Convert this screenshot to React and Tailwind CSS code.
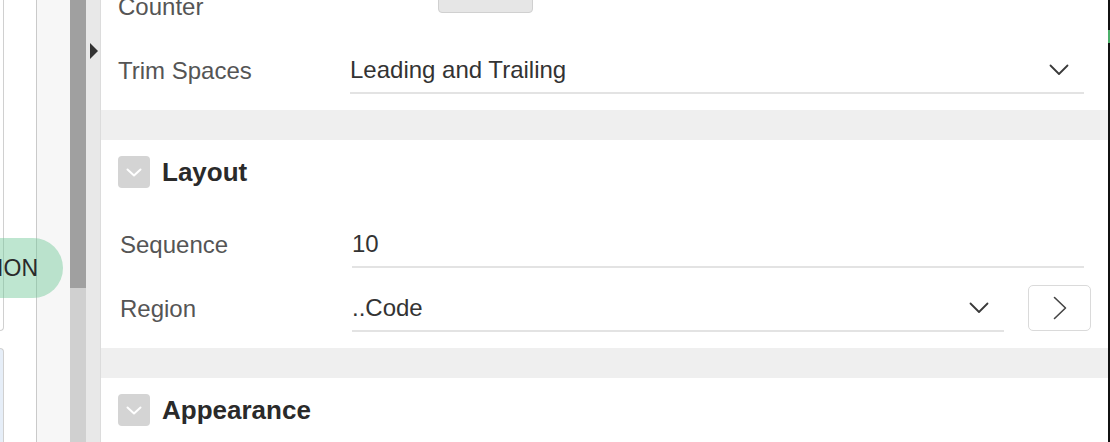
import React from 'react';

const font = { fontFamily: '"Liberation Sans", Arial, sans-serif' };

const ChevronDown = ({ className = '' }) => (
  <svg className={className} width="20" height="12" viewBox="0 0 20 12" fill="none">
    <path d="M1.5 1.5 L10 10 L18.5 1.5" stroke="#3a3a3a" strokeWidth="1.8" strokeLinecap="round" strokeLinejoin="round" />
  </svg>
);

const ChevronRight = () => (
  <svg width="14" height="24" viewBox="0 0 14 24" fill="none">
    <path d="M1.5 1.5 L12.5 12 L1.5 22.5" stroke="#444" strokeWidth="1.6" strokeLinecap="round" strokeLinejoin="round" />
  </svg>
);

const SectionHeader = ({ title }) => (
  <div className="flex items-center pl-[17px] pt-[16px] pb-[16px]">
    <div className="w-[32px] h-[32px] rounded-[4px] bg-[#d4d4d4] flex items-center justify-center">
      <svg width="16" height="9" viewBox="0 0 16 9" fill="none">
        <path d="M1.5 1.5 L8 7.5 L14.5 1.5" stroke="#ffffff" strokeWidth="2" strokeLinecap="round" strokeLinejoin="round" />
      </svg>
    </div>
    <span className="ml-[12px] text-[26px] font-bold text-[#2a2a2a] leading-[32px]">{title}</span>
  </div>
);

const Label = ({ children }) => (
  <div className="w-[232px] shrink-0 flex items-center pt-[2px] text-[24px] text-[#555]">{children}</div>
);

export default function App() {
  return (
    <div className="relative flex h-[442px] w-[1110px] overflow-hidden bg-white" style={font}>
      {/* canvas edge */}
      <div className="w-[36px] shrink-0 flex flex-col">
        <div className="h-[331px] w-[4px] border-r border-b border-[#d0d0d0] rounded-br-[6px]" />
        <div className="mt-[17px] flex-1 w-[4px] bg-[#e6eef8] border-r border-t border-[#d0d0d0] rounded-tr-[6px]" />
      </div>
      <div className="w-[34px] shrink-0 border-l border-[#cacaca] bg-[#f7f7f7]" />

      {/* scrollbar */}
      <div className="w-[16px] shrink-0 flex flex-col">
        <div className="h-[288px] bg-[#a0a0a0]" />
        <div className="flex-1 bg-[#d0d0d0]" />
      </div>

      {/* collapse strip */}
      <div className="w-[15px] shrink-0 bg-[#e8e8e8] border-r border-[#dcdcdc] pt-[43px] pl-[4px]">
        <svg width="8" height="16" viewBox="0 0 8 16">
          <path d="M0 0 L8 8 L0 16 Z" fill="#333" />
        </svg>
      </div>

      {/* property panel */}
      <div className="flex-1 flex flex-col overflow-hidden">
        <div className="pl-[17px] pr-[24px] pb-[16px]">
          <div className="-mt-[18px] flex h-[48px]">
            <Label>Counter</Label>
            <div className="ml-[88px] h-[31px] w-[95px] bg-[#e6e6e6] border border-[#d0d0d0] rounded-b-[4px]" />
          </div>
          <div className="mt-[16px] flex h-[48px]">
            <Label>Trim Spaces</Label>
            <div className="flex-1 flex items-center justify-between border-b-2 border-[#e3e3e3] pt-[2px] pr-[15px] text-[24px] text-[#333]">
              <span>Leading and Trailing</span>
              <ChevronDown />
            </div>
          </div>
        </div>

        <div className="h-[30px] shrink-0 bg-[#efefef]" />

        <SectionHeader title="Layout" />
        <div className="mt-[16px] pl-[19px] pr-[24px] flex h-[48px]">
          <Label>Sequence</Label>
          <div className="flex-1 flex items-center border-b-2 border-[#e3e3e3] pt-[2px] text-[24px] text-[#333]">
            <span>10</span>
          </div>
        </div>
        <div className="mt-[16px] pl-[19px] pr-[17px] flex h-[48px] items-stretch">
          <Label>Region</Label>
          <div className="flex-1 flex items-center justify-between border-b-2 border-[#e3e3e3] pt-[2px] pr-[15px] text-[24px] text-[#333]">
            <span>..Code</span>
            <ChevronDown />
          </div>
          <button className="ml-[24px] my-[1px] w-[63px] rounded-[5px] border border-[#dadada] bg-white flex items-center justify-center">
            <ChevronRight />
          </button>
        </div>
        <div className="h-[16px] shrink-0" />

        <div className="h-[30px] shrink-0 bg-[#efefef]" />

        <SectionHeader title="Appearance" />
      </div>

      {/* window edge */}
      <div className="w-[2px] shrink-0 bg-[#111] pt-[30px]">
        <div className="h-[13px] w-[2px] bg-[#4caf6a]" />
      </div>

      {/* pill overlapping canvas */}
      <div className="absolute left-[-40px] top-[238px] h-[60px] w-[103px] rounded-full bg-[rgba(110,200,150,0.45)] flex items-center justify-end pr-[25px] text-[23px] text-[#2a2a2a]">
        ION
      </div>
    </div>
  );
}
